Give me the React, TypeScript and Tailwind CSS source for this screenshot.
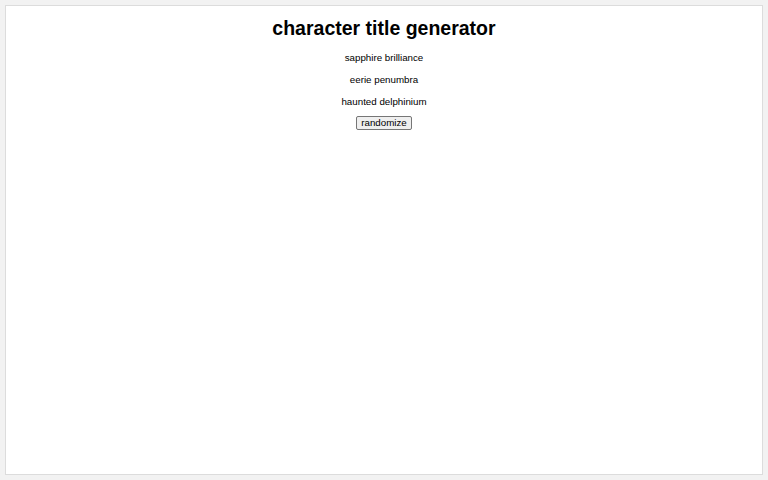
import React, { useState } from 'react';

const adjectives = ['sapphire', 'eerie', 'haunted', 'crimson', 'silent', 'gilded'];
const nouns = ['brilliance', 'penumbra', 'delphinium', 'reverie', 'ember', 'hollow'];

export default function App() {
  const [titles, setTitles] = useState([
    'sapphire brilliance',
    'eerie penumbra',
    'haunted delphinium',
  ]);

  // pick three fresh adjective + noun pairs
  const randomize = () => {
    const pick = (list: string[]) => list[Math.floor(Math.random() * list.length)];
    setTitles([0, 1, 2].map(() => `${pick(adjectives)} ${pick(nouns)}`));
  };

  return (
    <div className="w-screen h-screen bg-[#f2f2f2] p-[5px] font-['Liberation_Sans',Arial,sans-serif] text-black">
      <div className="h-[470px] bg-white border border-[#dcdcdc] flex flex-col items-center pt-[10px]">
        <h1 className="text-[19.5px] leading-[24px] font-bold">character title generator</h1>
        <div className="flex flex-col items-center mt-[12px] gap-[10px]">
          {titles.map((t, i) => (
            <p key={i} className="text-[9.75px] leading-[12px]">{t}</p>
          ))}
          <button
            onClick={randomize}
            className="-mt-[2px] text-[9.75px] leading-[12px] px-[4px] py-0 bg-[#efefef] border border-[#767676] rounded-[2px]"
          >
            randomize
          </button>
        </div>
      </div>
    </div>
  );
}
